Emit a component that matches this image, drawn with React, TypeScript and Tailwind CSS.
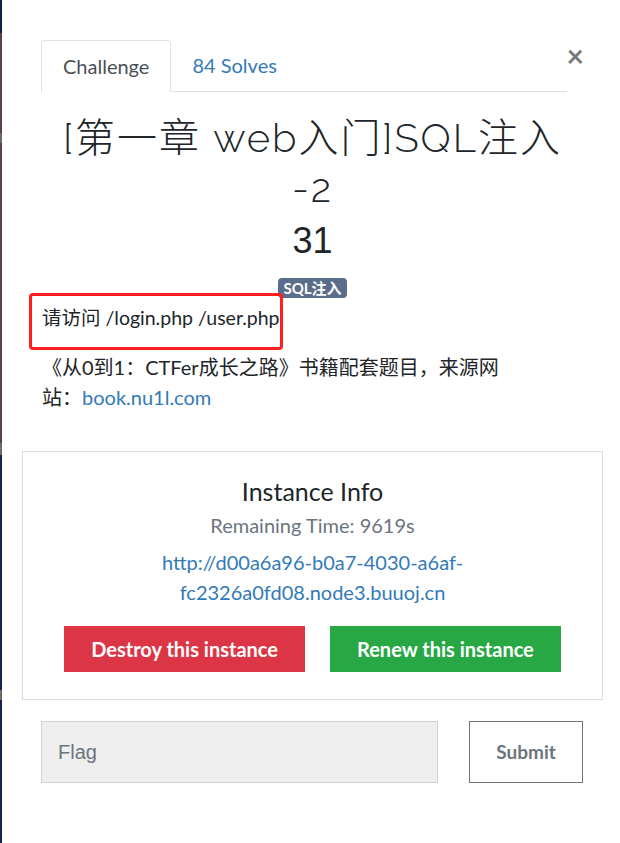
import { FC } from "react";

const Strip: FC = () => (
  <div className="flex w-[2px] shrink-0 flex-col">
    <div className="h-[33px] bg-[#13204d]" />
    <div className="h-[100px] bg-[#5c4050]" />
    <div className="h-[10px] bg-[#6b6b6b]" />
    <div className="h-[300px] bg-[#5c4050]" />
    <div className="h-[12px] bg-[#6b6b6b]" />
    <div className="h-[235px] bg-[#132454]" />
    <div className="h-[10px] bg-[#6b6b6b]" />
    <div className="flex-1 bg-[#132454]" />
  </div>
);

const App: FC = () => {
  return (
    <div className="flex h-[843px] w-[620px] overflow-hidden bg-white font-['Lato','Noto_Sans_CJK_SC',sans-serif] text-[#212529]">
      <Strip />
      <div className="relative flex-1 pl-[20px] pr-[17px] pt-[40px]">
        <button className="absolute right-[36px] top-[40px] text-[30px] font-bold leading-[30px] text-[#7a7a7a]">
          ×
        </button>

        <div className="ml-[19px] mr-[36px] flex border-b border-[#dee2e6]">
          <div className="-mb-px rounded-t-[4px] border border-b-white border-[#dee2e6] px-[21px] py-[12px] text-[20px] leading-[26px] text-[#495057]">
            Challenge
          </div>
          <div className="px-[21px] py-[12px] text-[20px] leading-[26px] text-[#337ab7]">
            84 Solves
          </div>
        </div>

        <h1 className="mt-[21px] text-center font-['Raleway','Lato','Noto_Sans_CJK_SC',sans-serif] text-[40px] font-light leading-[50px] tracking-[2px]">
          [第一章 web入门]SQL注入
          <br />
          -2
        </h1>
        <div className="mt-[3px] text-center font-['Liberation_Sans',sans-serif] text-[36px] leading-[50px]">
          31
        </div>

        <div className="mt-[12px] flex justify-center">
          <span className="rounded-[4px] bg-[#5a6d8a] px-[5px] text-[15px] font-bold leading-[20px] text-white">
            SQL注入
          </span>
        </div>

        <div className="relative pl-[20px]">
          <div className="absolute left-[7px] top-[-5px] h-[57px] w-[254px] rounded-[4px] border-[3px] border-[#ff1f1f]" />
          <p className="pt-[5px] text-[19.5px] leading-[30px]">请访问 /login.php /user.php</p>
          <p className="mt-[19px] max-w-[480px] text-[20px] leading-[30px]">
            《从0到1：CTFer成长之路》书籍配套题目，来源网站：
            <a className="text-[#337ab7]">book.nu1l.com</a>
          </p>
        </div>

        <div className="mt-[39px] border border-[#dddddd] px-[40px] pb-[27px] pt-[22px] text-center">
          <h3 className="text-[25px] leading-[34px]">Instance Info</h3>
          <p className="mt-[2px] text-[20px] leading-[30px] text-[#6c757d]">Remaining Time: 9619s</p>
          <p className="mt-[7px] text-[20px] leading-[30px] text-[#337ab7]">
            http://d00a6a96-b0a7-4030-a6af-fc2326a0fd08.node3.buuoj.cn
          </p>
          <div className="mt-[19px] flex justify-center gap-[25px]">
            <button className="h-[46px] bg-[#dc3545] px-[27px] text-[20px] font-bold text-white">
              Destroy this instance
            </button>
            <button className="h-[46px] bg-[#28a745] px-[27px] text-[20px] font-bold text-white">
              Renew this instance
            </button>
          </div>
        </div>

        <div className="mt-[21px] flex gap-[31px] pl-[19px]">
          <input
            className="h-[62px] w-[397px] border border-[#ced4da] bg-[#efefef] px-[16px] font-['Liberation_Sans',sans-serif] text-[20px] placeholder:text-[#6c757d]"
            placeholder="Flag"
          />
          <button className="h-[62px] w-[114px] border-[1.5px] border-[#6c757d] bg-white text-[19px] font-bold text-[#6c757d]">
            Submit
          </button>
        </div>
      </div>
    </div>
  );
};

export default App;
